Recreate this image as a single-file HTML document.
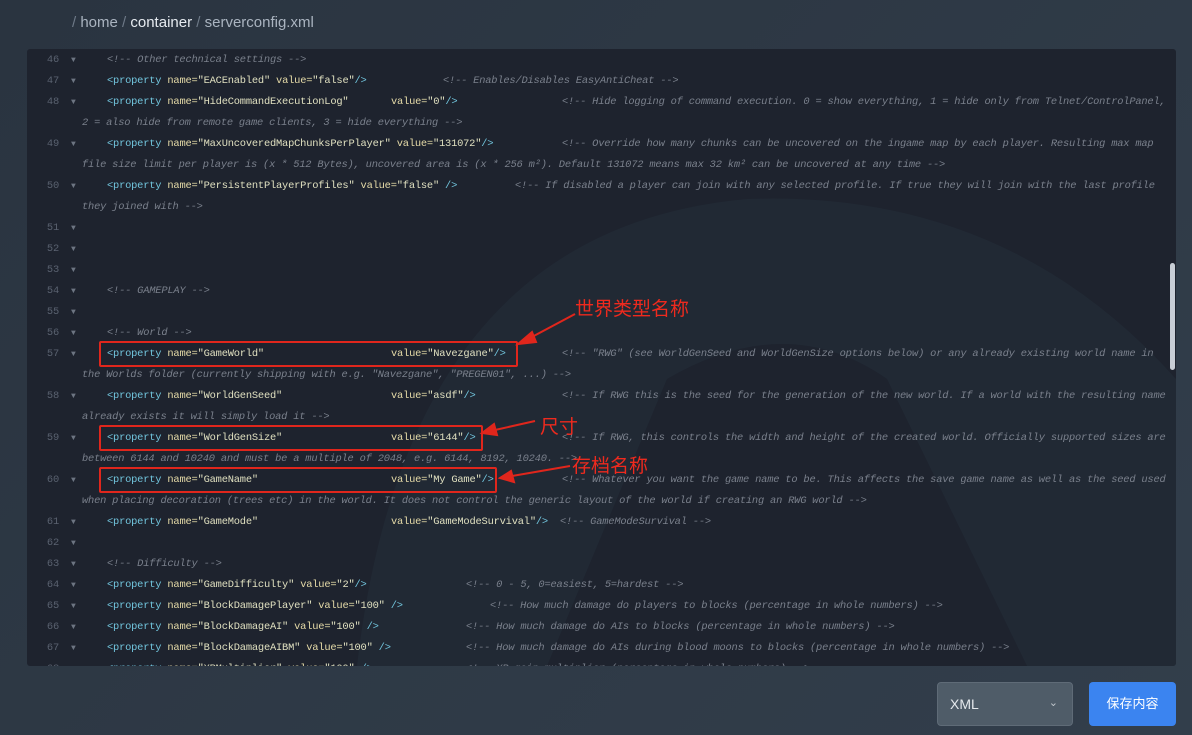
<!DOCTYPE html>
<html><head><meta charset="utf-8"><style>
html,body{margin:0;width:1192px;height:735px;overflow:hidden}
body{background:linear-gradient(135deg,#2a3440,#323e4b);font-family:"Liberation Sans","Noto Sans CJK SC",sans-serif;position:relative}
.bc{position:absolute;left:72px;top:14px;font-size:15px;color:#aab4c0}
.bc b{font-weight:normal;color:#e6ebf0}
.bc i{font-style:normal;color:#6e7a88}
.ed{position:absolute;left:27px;top:49px;width:1149px;height:617px;background:#1e232e;border-radius:3px;overflow:hidden}
.r{position:absolute;height:21px;line-height:21px;font-family:"Liberation Mono",monospace;font-size:10.4px;white-space:pre;letter-spacing:-0.2px}
.n{left:0;width:32px;text-align:right;color:#5a6270}
.f{left:44px;color:#6d7582;font-size:8px}
.c{color:#7a808c;font-style:italic}
.t{color:#72c6de}.a{color:#e6dba8}.v{color:#e0e0c0}
.box{position:absolute;border:2px solid #e0261c;border-radius:2px}
.lbl{position:absolute;color:#ee2a1e;font-size:19px;font-family:"Liberation Sans","Noto Sans CJK SC",sans-serif}
.sel{position:absolute;left:937px;top:682px;width:136px;height:44px;background:#4f5c68;border:1px solid #5f6b77;border-radius:4px;box-sizing:border-box;color:#e4e8ec;font-size:14px;line-height:42px;padding-left:12px}
.btn{position:absolute;left:1089px;top:682px;width:87px;height:44px;background:#3b84f0;border-radius:4px;color:#fff;font-size:13px;line-height:44px;text-align:center}
</style></head><body>
<div class="bc"><i>/</i> home <i>/</i> <b>container</b> <i>/</i> serverconfig.xml</div>
<div class="ed">
<svg style="position:absolute;left:0;top:0" width="1149" height="617"><path d="M330 617 Q380 180 720 150 Q980 140 1149 330 L1149 617 L1000 617 L860 330 Q760 260 640 330 L520 617 Z" fill="#232d39" opacity="0.6"/></svg>
<div id="L"></div>
<div style="position:absolute;left:1143px;top:214px;width:5px;height:107px;background:#c8ced6;border-radius:3px"></div>
</div>
<div class="box" style="left:99px;top:341px;width:415px;height:22px"></div>
<div class="box" style="left:99px;top:425px;width:380px;height:22px"></div>
<div class="box" style="left:99px;top:467px;width:394px;height:22px"></div>
<svg style="position:absolute;left:0;top:0" width="1192" height="735"><g stroke="#e0261c" stroke-width="2" fill="#e0261c">
<line x1="575" y1="314" x2="530" y2="338"/><polygon points="518,344 532,332 536,342"/>
<line x1="535" y1="421" x2="495" y2="430"/><polygon points="482,433 494,424 497,435"/>
<line x1="570" y1="466" x2="512" y2="476"/><polygon points="500,478 511,471 514,482"/></g></svg>
<div class="lbl" style="left:575px;top:294px">世界类型名称</div>
<div class="lbl" style="left:540px;top:412px">尺寸</div>
<div class="lbl" style="left:572px;top:451px">存档名称</div>
<div class="sel">XML<span style="position:absolute;right:14px;top:-1px;font-size:11px;color:#c0c6cc">&#8964;</span></div>
<div class="btn">保存内容</div>
<script>
const N=n=>`<span class="t">&lt;property</span> <span class="a">name=</span><span class="v">"${n}"</span>`;
const V=(v,sp)=>`<span class="a">value=</span><span class="v">"${v}"</span>${sp?' ':''}<span class="t">/&gt;</span>`;
const P=(n,v,vx,cx,c,sp)=>vx?[N(n),vx,V(v,sp),cx,c]:[N(n)+' '+V(v,sp),0,'',cx,c];
const rows=[
[46,'c','<!-- Other technical settings -->'],
[47,'p',P('EACEnabled','false',0,443,'<!-- Enables/Disables EasyAntiCheat -->')],
[48,'p',P('HideCommandExecutionLog','0',391,562,'<!-- Hide logging of command execution. 0 = show everything, 1 = hide only from Telnet/ControlPanel,')],
[0,'w','2 = also hide from remote game clients, 3 = hide everything -->'],
[49,'p',P('MaxUncoveredMapChunksPerPlayer','131072',0,562,'<!-- Override how many chunks can be uncovered on the ingame map by each player. Resulting max map')],
[0,'w','file size limit per player is (x * 512 Bytes), uncovered area is (x * 256 m²). Default 131072 means max 32 km² can be uncovered at any time -->'],
[50,'p',P('PersistentPlayerProfiles','false',0,515,'<!-- If disabled a player can join with any selected profile. If true they will join with the last profile',1)],
[0,'w','they joined with -->'],
[51,'e'],[52,'e'],[53,'e'],
[54,'c','<!-- GAMEPLAY -->'],[55,'e'],[56,'c','<!-- World -->'],
[57,'p',P('GameWorld','Navezgane',391,562,'<!-- "RWG" (see WorldGenSeed and WorldGenSize options below) or any already existing world name in')],
[0,'w','the Worlds folder (currently shipping with e.g. "Navezgane", "PREGEN01", ...) -->'],
[58,'p',P('WorldGenSeed','asdf',391,562,'<!-- If RWG this is the seed for the generation of the new world. If a world with the resulting name')],
[0,'w','already exists it will simply load it -->'],
[59,'p',P('WorldGenSize','6144',391,562,'<!-- If RWG, this controls the width and height of the created world. Officially supported sizes are')],
[0,'w','between 6144 and 10240 and must be a multiple of 2048, e.g. 6144, 8192, 10240. -->'],
[60,'p',P('GameName','My Game',391,562,'<!-- Whatever you want the game name to be. This affects the save game name as well as the seed used')],
[0,'w','when placing decoration (trees etc) in the world. It does not control the generic layout of the world if creating an RWG world -->'],
[61,'p',P('GameMode','GameModeSurvival',391,560,'<!-- GameModeSurvival -->')],
[62,'e'],[63,'c','<!-- Difficulty -->'],
[64,'p',P('GameDifficulty','2',0,466,'<!-- 0 - 5, 0=easiest, 5=hardest -->')],
[65,'p',P('BlockDamagePlayer','100',0,490,'<!-- How much damage do players to blocks (percentage in whole numbers) -->',1)],
[66,'p',P('BlockDamageAI','100',0,466,'<!-- How much damage do AIs to blocks (percentage in whole numbers) -->',1)],
[67,'p',P('BlockDamageAIBM','100',0,466,'<!-- How much damage do AIs during blood moons to blocks (percentage in whole numbers) -->',1)],
[68,'p',P('XPMultiplier','100',0,466,'<!-- XP gain multiplier (percentage in whole numbers) -->',1)]];
let h='',esc=s=>s.replace(/</g,'&lt;').replace(/>/g,'&gt;');
rows.forEach((r,i)=>{const y=i*21-2+2.5;const R=(l,cls,html)=>h+=`<div class="r ${cls}" style="left:${l}px;top:${y}px">${html}</div>`;
if(r[0]){R(0,'n',r[0]);R(44,'f','▼');}
if(r[1]=='c')R(80,'c',esc(r[2]));
if(r[1]=='w')R(55,'c',esc(r[2]));
if(r[1]=='p'){const p=r[2];R(80,'',p[0]);if(p[1])R(p[1]-27,'',p[2]);R(p[3]-27,'c',esc(p[4]));}
});
document.getElementById('L').innerHTML=h;
</script>
</body></html>
